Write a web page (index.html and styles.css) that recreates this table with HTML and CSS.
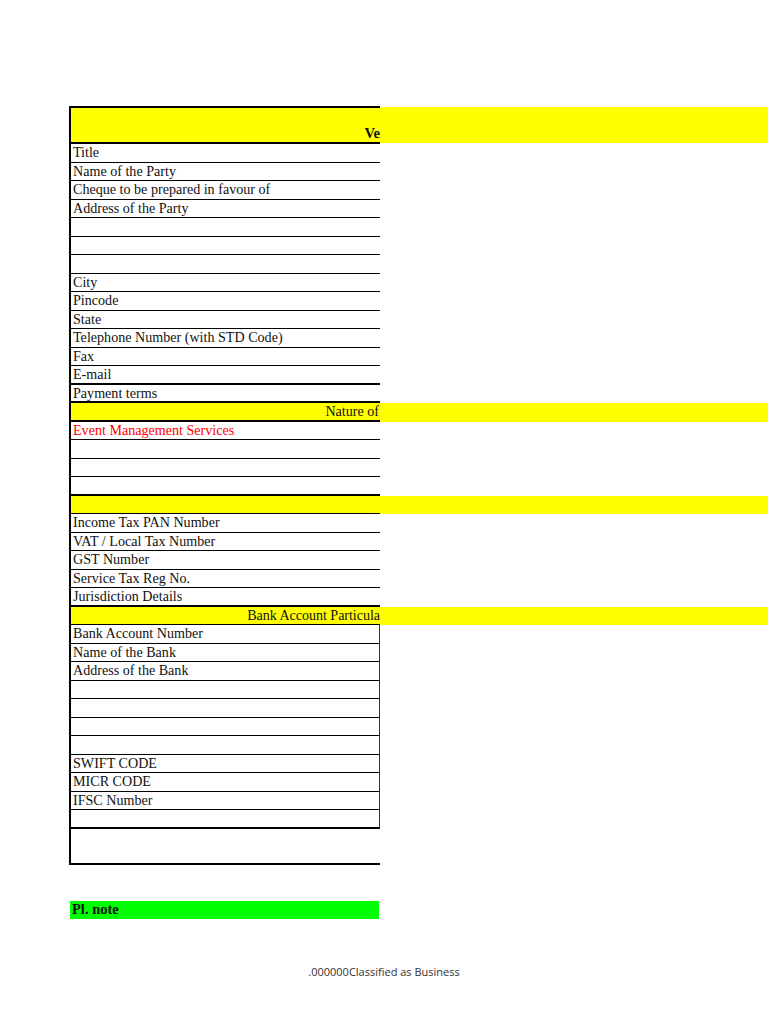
FILE: index.html
```html
<!DOCTYPE html>
<html>
<head>
<meta charset="utf-8">
<link rel="stylesheet" href="styles.css">
</head>
<body>
<div class="page">
  <div class="sheet">
    <div class="row head"><div class="cell band right">Ve</div><div class="fill yellow"></div></div>
    <div class="row"><div class="cell">Title</div><div class="fill"></div></div>
    <div class="row"><div class="cell">Name of the Party</div><div class="fill"></div></div>
    <div class="row"><div class="cell">Cheque to be prepared in favour of</div><div class="fill"></div></div>
    <div class="row"><div class="cell">Address of the Party</div><div class="fill"></div></div>
    <div class="row"><div class="cell"></div><div class="fill"></div></div>
    <div class="row"><div class="cell"></div><div class="fill"></div></div>
    <div class="row"><div class="cell"></div><div class="fill"></div></div>
    <div class="row"><div class="cell">City</div><div class="fill"></div></div>
    <div class="row"><div class="cell">Pincode</div><div class="fill"></div></div>
    <div class="row"><div class="cell">State</div><div class="fill"></div></div>
    <div class="row"><div class="cell">Telephone Number (with STD Code)</div><div class="fill"></div></div>
    <div class="row"><div class="cell">Fax</div><div class="fill"></div></div>
    <div class="row"><div class="cell thick">E-mail</div><div class="fill"></div></div>
    <div class="row"><div class="cell thick">Payment terms</div><div class="fill"></div></div>
    <div class="row"><div class="cell band thick right">Nature of</div><div class="fill yellow"></div></div>
    <div class="row"><div class="cell red">Event Management Services</div><div class="fill"></div></div>
    <div class="row"><div class="cell"></div><div class="fill"></div></div>
    <div class="row"><div class="cell"></div><div class="fill"></div></div>
    <div class="row"><div class="cell thick"></div><div class="fill"></div></div>
    <div class="row"><div class="cell band"></div><div class="fill yellow"></div></div>
    <div class="row"><div class="cell">Income Tax PAN Number</div><div class="fill"></div></div>
    <div class="row"><div class="cell">VAT / Local Tax Number</div><div class="fill"></div></div>
    <div class="row"><div class="cell">GST Number</div><div class="fill"></div></div>
    <div class="row"><div class="cell">Service Tax Reg No.</div><div class="fill"></div></div>
    <div class="row"><div class="cell thick">Jurisdiction Details</div><div class="fill"></div></div>
    <div class="row"><div class="cell band right bank">Bank Account Particula</div><div class="fill yellow"></div></div>
    <div class="row"><div class="cell boxed">Bank Account Number</div><div class="fill"></div></div>
    <div class="row"><div class="cell boxed">Name of the Bank</div><div class="fill"></div></div>
    <div class="row"><div class="cell boxed">Address of the Bank</div><div class="fill"></div></div>
    <div class="row"><div class="cell boxed"></div><div class="fill"></div></div>
    <div class="row"><div class="cell boxed"></div><div class="fill"></div></div>
    <div class="row"><div class="cell boxed"></div><div class="fill"></div></div>
    <div class="row"><div class="cell boxed"></div><div class="fill"></div></div>
    <div class="row"><div class="cell boxed">SWIFT CODE</div><div class="fill"></div></div>
    <div class="row"><div class="cell boxed">MICR CODE</div><div class="fill"></div></div>
    <div class="row"><div class="cell boxed">IFSC Number</div><div class="fill"></div></div>
    <div class="row"><div class="cell boxed thick"></div><div class="fill"></div></div>
    <div class="row big"><div class="cell thick"></div><div class="fill"></div></div>
  </div>
  <div class="note">Pl. note</div>
  <div class="footer">.000000Classified as Business</div>
</div>
</body>
</html>
```

FILE: styles.css
```css
* { box-sizing: border-box; }
html, body { margin: 0; padding: 0; background: #fff; }
body {
  font-family: "Liberation Serif", "Times New Roman", serif;
  font-size: 14.1px;
  color: #111;
}
.page {
  width: 768px;
  height: 1024px;
  padding-top: 106px;
  display: flex;
  flex-direction: column;
}
.sheet {
  margin-left: 69px;
  border-left: 2px solid #000;
}
.row {
  display: flex;
  height: 18.5px;
}
.cell {
  width: 309px;
  flex: none;
  border-bottom: 1px solid #000;
  padding: 0 0 0 2px;
  white-space: nowrap;
  line-height: 17px;
}
.right { text-align: right; padding: 0 1px 0 0; }
.bank { padding-right: 0; letter-spacing: -0.05px; }
.fill { flex: 1; }
.yellow { background: #ffff00; }
.band { background: #ffff00; }
.thick { border-bottom: 2px solid #000; }
.red { color: #ff0000; }
.boxed { border-right: 1px solid #333; }
.row.big { height: 36px; }

.row.head { height: 38px; }
.head .cell {
  border-top: 2px solid #000;
  border-bottom: 2px solid #000;
  height: 38px;
  padding-top: 16px;
  padding-right: 0;
  font-weight: bold;
  font-size: 14.5px;
  line-height: 18px;
}
.head .fill { margin-top: 1px; height: 36px; }

.note {
  margin-top: 36px;
  margin-left: 70px;
  width: 309px;
  height: 18px;
  background: #00ff00;
  font-weight: bold;
  font-size: 14.5px;
  padding-left: 2px;
  line-height: 17px;
}
.footer {
  margin-top: 45px;
  text-align: center;
  font-family: "Open Sans", "Liberation Sans", sans-serif;
  font-size: 11px;
  color: #333;
}
```
